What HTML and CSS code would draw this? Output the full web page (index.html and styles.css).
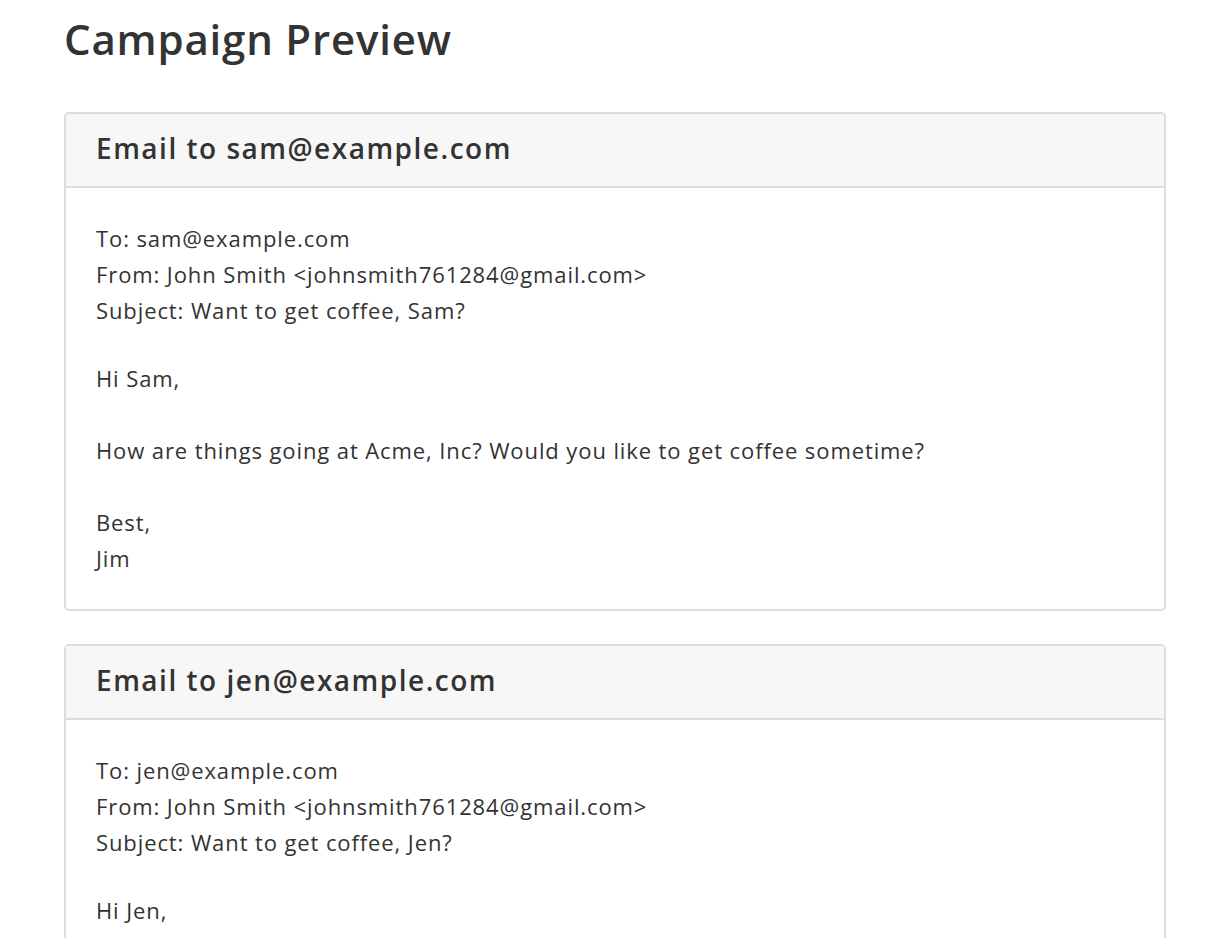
FILE: index.html
```html
<!DOCTYPE html>
<html>
<head>
<meta charset="utf-8">
<link rel="stylesheet" href="styles.css">
</head>
<body>
<div class="page">
  <h1 class="title">Campaign Preview</h1>
  <div class="card">
    <div class="card-header">Email to sam@example.com</div>
    <div class="card-body">
      <div class="meta">
        <div>To: sam@example.com</div>
        <div>From: John Smith &lt;johnsmith761284@gmail.com&gt;</div>
        <div>Subject: Want to get coffee, Sam?</div>
      </div>
      <p>Hi Sam,</p>
      <p>How are things going at Acme, Inc? Would you like to get coffee sometime?</p>
      <p>Best,<br>Jim</p>
    </div>
  </div>
  <div class="card">
    <div class="card-header">Email to jen@example.com</div>
    <div class="card-body">
      <div class="meta">
        <div>To: jen@example.com</div>
        <div>From: John Smith &lt;johnsmith761284@gmail.com&gt;</div>
        <div>Subject: Want to get coffee, Jen?</div>
      </div>
      <p>Hi Jen,</p>
      <p>How are things going at Acme, Inc? Would you like to get coffee sometime?</p>
      <p>Best,<br>Jim</p>
    </div>
  </div>
</div>
</body>
</html>
```
FILE: styles.css
```css
html, body {
  margin: 0;
  padding: 0;
  background: #fff;
}
body {
  font-family: "Open Sans", Lato, sans-serif;
  color: #333;
}
.page {
  padding: 0 60px 0 64px;
}
.title {
  margin: 0;
  padding-top: 13px;
  height: 112px;
  box-sizing: border-box;
  font-size: 42px;
  line-height: 52px;
  font-weight: 600;
  letter-spacing: 0.8px;
  color: #333;
}
.card {
  border: 2px solid #ddd;
  border-radius: 5px;
  margin-bottom: 33px;
  overflow: hidden;
}
.card-header {
  background: #f7f7f7;
  border-bottom: 2px solid #ddd;
  height: 74px;
  box-sizing: border-box;
  padding: 0 30px 4px;
  display: flex;
  align-items: center;
  font-size: 28px;
  font-weight: 600;
  letter-spacing: 1.5px;
  color: #333;
}
.card-body {
  padding: 32px 30px 33px;
  font-size: 22px;
  line-height: 36px;
  font-weight: 400;
  letter-spacing: 0.9px;
}
.meta {
  margin-bottom: 32px;
}
.card-body p {
  margin: 0 0 36px;
}
.card-body p:last-child {
  margin-bottom: 0;
}
```
